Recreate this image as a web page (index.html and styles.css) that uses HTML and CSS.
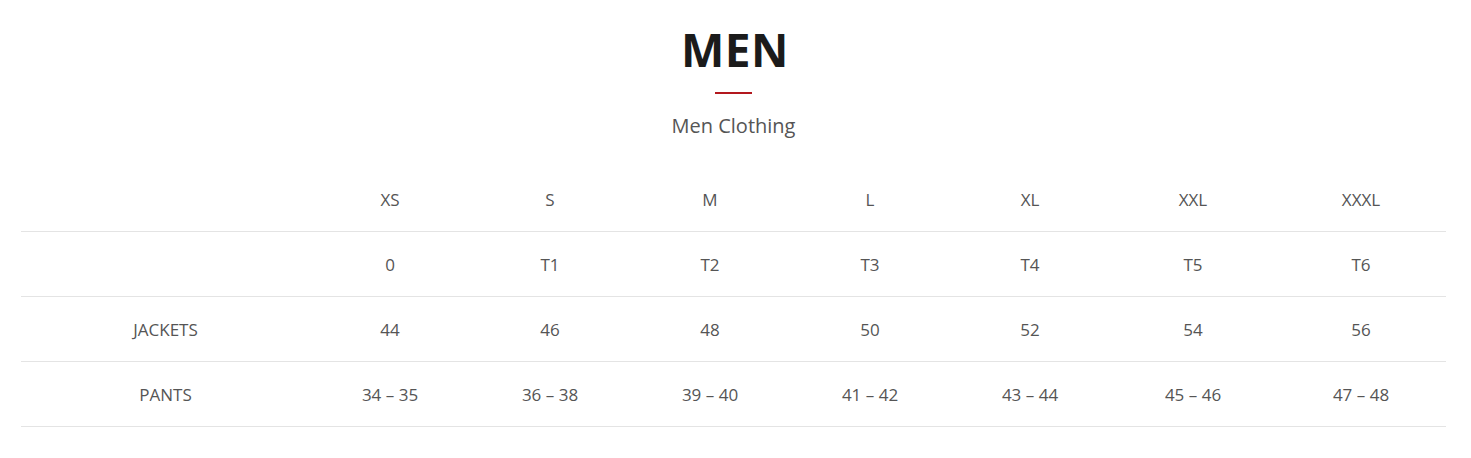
FILE: index.html
```html
<!DOCTYPE html>
<html lang="en">
<head>
<meta charset="utf-8">
<title>Men Size Guide</title>
<link rel="stylesheet" href="styles.css">
</head>
<body>
<section class="size-guide">
  <header class="guide-head">
    <h1 class="guide-title">MEN</h1>
    <div class="guide-sep"></div>
    <p class="guide-sub">Men Clothing</p>
  </header>
  <table class="size-table">
    <colgroup>
      <col class="c-label">
      <col class="c-std"><col class="c-std"><col class="c-std"><col class="c-std"><col class="c-std">
      <col class="c-wide"><col class="c-wider">
    </colgroup>
    <tbody>
      <tr><td></td><td>XS</td><td>S</td><td>M</td><td>L</td><td>XL</td><td>XXL</td><td>XXXL</td></tr>
      <tr><td></td><td>0</td><td>T1</td><td>T2</td><td>T3</td><td>T4</td><td>T5</td><td>T6</td></tr>
      <tr><td>JACKETS</td><td>44</td><td>46</td><td>48</td><td>50</td><td>52</td><td>54</td><td>56</td></tr>
      <tr><td>PANTS</td><td>34 – 35</td><td>36 – 38</td><td>39 – 40</td><td>41 – 42</td><td>43 – 44</td><td>45 – 46</td><td>47 – 48</td></tr>
    </tbody>
  </table>
</section>
</body>
</html>
```

FILE: styles.css
```css
html, body {
  margin: 0;
  padding: 0;
  background: #ffffff;
}
body {
  font-family: "Open Sans", "Liberation Sans", sans-serif;
  color: #555555;
}
.size-guide {
  padding: 22px 25px 0 21px;
}
.guide-head {
  display: flex;
  flex-direction: column;
  align-items: center;
}
.guide-title {
  margin: 0;
  font-size: 46px;
  line-height: 55px;
  font-weight: 700;
  color: #1b1b1b;
  letter-spacing: 0.5px;
  padding-left: 3px;
}
.guide-sep {
  width: 37px;
  height: 2px;
  background: #b3181e;
  margin-top: 15px;
}
.guide-sub {
  margin: 17px 0 0 0;
  font-size: 20px;
  line-height: 30px;
  color: #555555;
}
.size-table {
  width: 100%;
  margin-top: 26px;
  border-collapse: collapse;
  table-layout: fixed;
}
.c-label { width: 289px; }
.c-std { width: 160px; }
.c-wide { width: 166px; }
.c-wider { width: 170px; }
.size-table td {
  height: 64px;
  padding: 0;
  text-align: center;
  vertical-align: middle;
  font-size: 17px;
  color: #555555;
  border-bottom: 1px solid #e4e4e4;
}
```
